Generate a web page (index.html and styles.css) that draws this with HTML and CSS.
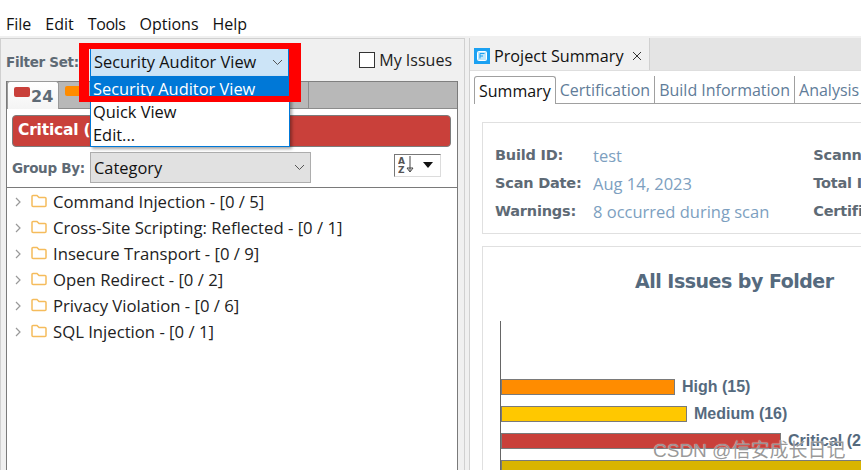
FILE: index.html
```html
<!DOCTYPE html>
<html lang="en">
<head>
<meta charset="utf-8">
<title>Audit Workbench</title>
<link rel="stylesheet" href="styles.css">
</head>
<body>
<nav class="menubar">
  <span>File</span><span>Edit</span><span class="menu-tools">Tools</span><span>Options</span><span>Help</span>
</nav>
<div class="workspace">
  <aside class="left-pane">
    <div class="filter-row">
      <span class="bold-label">Filter Set:</span>
      <div class="combo combo-open">
        <span class="combo-text">Security Auditor View</span>
        <svg class="chev" width="11" height="7" viewBox="0 0 11 7"><path d="M1 1l4.5 4.5L10 1" fill="none" stroke="#555" stroke-width="1"/></svg>
      </div>
      <label class="my-issues"><span class="checkbox"></span>My Issues</label>
    </div>
    <div class="issues-panel">
      <div class="sev-tabs">
        <div class="sev-tab sev-active"><span class="swatch swatch-red"></span><b>24</b></div>
        <div class="sev-tab sev-wide"><span class="swatch swatch-orange"></span></div>
        <div class="sev-tab sev-last"></div>
      </div>
      <div class="critical-bar">Critical (24)</div>
      <div class="group-row">
        <span class="bold-label">Group By:</span>
        <div class="combo combo-grey">
          <span>Category</span>
          <svg class="chev" width="11" height="7" viewBox="0 0 11 7"><path d="M1 1l4.5 4.5L10 1" fill="none" stroke="#555" stroke-width="1"/></svg>
        </div>
        <div class="sort-btn">
          <svg width="20" height="20" viewBox="0 0 20 20"><text x="0" y="9" class="az">A</text><text x="0" y="18" class="az">Z</text><path d="M12 1v15M9 13l3 4 3-4z" fill="none" stroke="#444"/></svg>
          <svg width="12" height="6" viewBox="0 0 12 6"><path d="M1 0h10L6 6z" fill="#111"/></svg>
        </div>
      </div>
      <ul class="tree">
        <li><svg class="arrow" width="7" height="10" viewBox="0 0 7 10"><path d="M1 1l4 4-4 4" fill="none" stroke="#999" stroke-width="1.2"/></svg><svg class="folder" width="16" height="14" viewBox="0 0 16 14"><path d="M1 2.500a1 1 0 0 1 1-1h4l2 2h6a1 1 0 0 1 1 1v7a1 1 0 0 1-1 1H2a1 1 0 0 1-1-1z" fill="#fff" stroke="#f5bc5c" stroke-width="1.500"/></svg>Command Injection - [0 / 5]</li>
        <li><svg class="arrow" width="7" height="10" viewBox="0 0 7 10"><path d="M1 1l4 4-4 4" fill="none" stroke="#999" stroke-width="1.2"/></svg><svg class="folder" width="16" height="14" viewBox="0 0 16 14"><path d="M1 2.500a1 1 0 0 1 1-1h4l2 2h6a1 1 0 0 1 1 1v7a1 1 0 0 1-1 1H2a1 1 0 0 1-1-1z" fill="#fff" stroke="#f5bc5c" stroke-width="1.500"/></svg>Cross-Site Scripting: Reflected - [0 / 1]</li>
        <li><svg class="arrow" width="7" height="10" viewBox="0 0 7 10"><path d="M1 1l4 4-4 4" fill="none" stroke="#999" stroke-width="1.2"/></svg><svg class="folder" width="16" height="14" viewBox="0 0 16 14"><path d="M1 2.500a1 1 0 0 1 1-1h4l2 2h6a1 1 0 0 1 1 1v7a1 1 0 0 1-1 1H2a1 1 0 0 1-1-1z" fill="#fff" stroke="#f5bc5c" stroke-width="1.500"/></svg>Insecure Transport - [0 / 9]</li>
        <li><svg class="arrow" width="7" height="10" viewBox="0 0 7 10"><path d="M1 1l4 4-4 4" fill="none" stroke="#999" stroke-width="1.2"/></svg><svg class="folder" width="16" height="14" viewBox="0 0 16 14"><path d="M1 2.500a1 1 0 0 1 1-1h4l2 2h6a1 1 0 0 1 1 1v7a1 1 0 0 1-1 1H2a1 1 0 0 1-1-1z" fill="#fff" stroke="#f5bc5c" stroke-width="1.500"/></svg>Open Redirect - [0 / 2]</li>
        <li><svg class="arrow" width="7" height="10" viewBox="0 0 7 10"><path d="M1 1l4 4-4 4" fill="none" stroke="#999" stroke-width="1.2"/></svg><svg class="folder" width="16" height="14" viewBox="0 0 16 14"><path d="M1 2.500a1 1 0 0 1 1-1h4l2 2h6a1 1 0 0 1 1 1v7a1 1 0 0 1-1 1H2a1 1 0 0 1-1-1z" fill="#fff" stroke="#f5bc5c" stroke-width="1.500"/></svg>Privacy Violation - [0 / 6]</li>
        <li><svg class="arrow" width="7" height="10" viewBox="0 0 7 10"><path d="M1 1l4 4-4 4" fill="none" stroke="#999" stroke-width="1.2"/></svg><svg class="folder" width="16" height="14" viewBox="0 0 16 14"><path d="M1 2.500a1 1 0 0 1 1-1h4l2 2h6a1 1 0 0 1 1 1v7a1 1 0 0 1-1 1H2a1 1 0 0 1-1-1z" fill="#fff" stroke="#f5bc5c" stroke-width="1.500"/></svg>SQL Injection - [0 / 1]</li>
      </ul>
    </div>
    <ul class="combo-menu">
      <li class="menu-selected">Security Auditor View</li>
      <li>Quick View</li>
      <li>Edit...</li>
    </ul>
    <div class="red-box"></div>
  </aside>
  <main class="right-pane">
    <div class="view-tabs">
      <div class="view-tab">
        <svg width="16" height="16" viewBox="0 0 16 16"><rect width="16" height="16" fill="#1ba1f2"/><rect x="3.500" y="3.500" width="9" height="9" rx="1" fill="#bfe6fb" stroke="#fff"/><path d="M6 5.500h4.500M6 8h3M6 5.500v5" stroke="#1ba1f2" fill="none"/></svg>
        <span>Project Summary</span>
        <svg class="close" width="10" height="10" viewBox="0 0 10 10"><path d="M1 1l8 8M9 1l-8 8" stroke="#333" stroke-width="1"/></svg>
      </div>
    </div>
    <div class="content">
      <div class="sub-tabs">
        <div class="sub-tab sub-active">Summary</div>
        <div class="sub-tab">Certification</div>
        <div class="sub-tab">Build Information</div>
        <div class="sub-tab">Analysis</div>
      </div>
      <section class="card info-card">
        <div class="info-col">
          <div class="info-row"><b>Build ID:</b><span>test</span></div>
          <div class="info-row"><b>Scan Date:</b><span>Aug 14, 2023</span></div>
          <div class="info-row"><b>Warnings:</b><span>8 occurred during scan</span></div>
        </div>
        <div class="info-col info-col2">
          <div class="info-row"><b>Scanned</b></div>
          <div class="info-row"><b>Total Issues</b></div>
          <div class="info-row"><b>Certification</b></div>
        </div>
      </section>
      <section class="card chart-card">
        <h2 class="chart-title">All Issues by Folder</h2>
        <div class="chart">
          <div class="bar-row"><div class="bar bar-high"></div><span>High (15)</span></div>
          <div class="bar-row"><div class="bar bar-medium"></div><span>Medium (16)</span></div>
          <div class="bar-row"><div class="bar bar-critical"></div><span>Critical (24)</span></div>
          <div class="bar-row"><div class="bar bar-low"></div></div>
        </div>
      </section>
    </div>
    <div class="watermark">CSDN @信安成长日记</div>
  </main>
</div>
</body>
</html>
```
FILE: styles.css
```css
* { box-sizing: border-box; }
html, body { margin: 0; padding: 0; }
body {
  width: 861px;
  height: 470px;
  overflow: hidden;
  background: #fff;
  color: #111;
  font-family: "Open Sans", "Noto Sans", sans-serif;
  font-size: 16px;
}
ul { list-style: none; margin: 0; padding: 0; }
.menubar {
  height: 36px;
  display: flex;
  gap: 14px;
  padding: 12px 0 0 6px;
  line-height: 24px;
  background: #fff;
  font-size: 16px;
}
.menu-tools { letter-spacing: -0.4px; }
.workspace {
  height: 434px;
  display: flex;
  background: #f0f0f0;
  padding-top: 2px;
}
.left-pane {
  position: relative;
  width: 465px;
  flex: none;
  border: 1px solid #d0d0d0;
  border-bottom: 0;
  background: #f0f0f0;
  padding: 0 6px 0 5px;
}
.bold-label {
  font-family: "DejaVu Sans", sans-serif;
  font-weight: 700;
  font-size: 13.500px;
  color: #5e6a75;
  letter-spacing: -0.3px;
}
.filter-row {
  height: 42px;
  display: flex;
  align-items: center;
  position: relative;
}
.filter-row .bold-label { width: 84px; flex: none; margin-top: 4px; }
.combo {
  display: flex;
  align-items: center;
  justify-content: space-between;
  padding: 0 5px 0 3px;
  font-size: 16.400px;
}
.combo-open {
  width: 199px;
  height: 28px;
  background: #cce4f7;
  border: 1px solid #0078d7;
  border-bottom: 0;
  margin-top: 4px;
}
.combo-text { margin-top: -2px; }
.my-issues {
  margin-left: auto;
  margin-right: 6px;
  display: flex;
  align-items: center;
  gap: 4px;
  color: #222;
}
.checkbox {
  width: 16px;
  height: 16px;
  border: 1px solid #333;
  background: #fff;
}
.issues-panel {
  height: 400px;
  background: #fff;
  border: 1px solid #7a7a7a;
  border-top: 0;
}
.sev-tabs {
  height: 28px;
  display: flex;
  background: #b8b8b8;
  border-top: 1px solid #7f7f7f;
  border-bottom: 1px solid #8c8c8c;
}
.sev-tab {
  display: flex;
  align-items: center;
  gap: 1px;
  border-right: 1px solid #8c8c8c;
  padding-left: 6px;
}
.sev-active {
  width: 52px;
  background: linear-gradient(#fff, #f4f4f4);
  height: 28px;
  border: 1px solid #9a9a9a;
  border-bottom: 0;
  border-radius: 3px 3px 0 0;
  margin-top: -1px;
  padding-top: 1px;
}
.sev-active b {
  font-family: "DejaVu Sans", sans-serif;
  font-size: 16px;
  color: #5e6a75;
}
.sev-wide { width: 250px; }
.sev-last { width: 0; flex: 1; border-right: 0; }
.swatch {
  width: 16px;
  height: 10px;
  border-radius: 2px;
  margin-top: -8px;
}
.swatch-red { background: #c9403a; }
.swatch-orange { background: #ff8c00; }
.critical-bar {
  height: 32px;
  margin: 6px 6px 0 5px;
  background: #c9403a;
  border: 1px solid #7c7c7c;
  border-radius: 4px;
  color: #fff;
  font-family: "DejaVu Sans", sans-serif;
  font-weight: 700;
  font-size: 15.500px;
  letter-spacing: -0.2px;
  line-height: 28px;
  padding-left: 5px;
}
.group-row {
  height: 36px;
  margin-top: 4px;
  display: flex;
  align-items: center;
  padding-left: 5px;
  padding-bottom: 3px;
}
.group-row .bold-label { width: 78px; flex: none; }
.combo-grey {
  width: 221px;
  height: 31px;
  background: #e1e1e1;
  border: 1px solid #adadad;
}
.sort-btn {
  width: 47px;
  height: 23px;
  margin-left: 83px;
  margin-top: -5px;
  background: #fff;
  border: 1px solid #dcdcdc;
  border-top-color: #777;
  border-left-color: #777;
  display: flex;
  align-items: center;
  gap: 4px;
  padding-left: 3px;
}
.az { font: 700 9px "DejaVu Sans", sans-serif; fill: #555; }
.tree {
  border-top: 1px solid #7a7a7a;
}
.tree li {
  height: 26px;
  display: flex;
  align-items: center;
  padding-left: 8px;
  font-size: 16.700px;
  color: #222;
  white-space: nowrap;
}
.arrow { margin-right: 9px; margin-top: 1px; }
.folder { margin-right: 6px; }
.combo-menu {
  position: absolute;
  left: 89px;
  top: 37px;
  width: 200px;
  background: #fff;
  border: 1px solid #0078d7;
  box-shadow: 2px 2px 3px rgba(0,0,0,.35);
  z-index: 2;
  font-size: 16.400px;
  line-height: 23px;
}
.combo-menu li { padding-left: 2px; height: 23px; }
.combo-menu .menu-selected { background: #0078d7; color: #fff; }
.red-box {
  position: absolute;
  left: 78px;
  top: 4px;
  width: 222px;
  height: 59px;
  border-style: solid;
  border-color: #ff0000;
  border-width: 6px 12px 6px 10px;
  z-index: 3;
}
.right-pane {
  position: relative;
  flex: 1;
  min-width: 0;
  margin-left: 4px;
  border-left: 1px solid #d0d0d0;
  background: #fff;
  overflow: hidden;
}
.view-tabs {
  height: 33px;
  background: #e4e4e4;
  display: flex;
  border-bottom: 1px solid #dedede;
}
.view-tab {
  width: 180px;
  background: #f0f0f0;
  border-right: 1px solid #d0d0d0;
  display: flex;
  align-items: center;
  gap: 4px;
  padding: 3px 0 0 4px;
  height: 32px;
  font-size: 16.200px;
}
.view-tab .close { margin-left: 4px; }
.content { padding: 0 0 0 4px; width: 500px; }
.sub-tabs {
  height: 28px;
  margin-top: 5px;
  display: flex;
  border-bottom: 1px solid #a0a0a0;
  color: #5f7c99;
}
.sub-tab {
  padding: 2px 4px 0 4px;
  border-right: 1px solid #a0a0a0;
  white-space: nowrap;
  line-height: 24px;
}
.sub-active {
  color: #111;
  border: 1px solid #a0a0a0;
  border-bottom: 0;
  border-radius: 3px 3px 0 0;
  height: 28px;
  background: #fff;
}
.card {
  border: 1px solid #e0e0e0;
  margin-left: 8px;
  border-right: 0;
  background: #fff;
  width: 420px;
}
.info-card {
  height: 112px;
  margin-top: 18px;
  display: flex;
  padding-top: 18px;
}
.info-col { padding-left: 12px; }
.info-col2 { margin-left: 32px; }
.info-row {
  display: flex;
  height: 28px;
  align-items: center;
  white-space: nowrap;
  color: #7d9fbf;
  font-size: 16.500px;
}
.info-row b {
  width: 98px;
  font-family: "DejaVu Sans", sans-serif;
  font-size: 14.500px;
  color: #5e6a75;
  letter-spacing: -0.2px;
}
.chart-card {
  height: 240px;
  margin-top: 12px;
  padding: 21px 0 0 17px;
  overflow: hidden;
}
.chart-title {
  margin: 0;
  padding-left: 135px;
  font-family: "DejaVu Sans", sans-serif;
  font-weight: 700;
  font-size: 19px;
  line-height: 26px;
  color: #556a7e;
  letter-spacing: -0.5px;
  white-space: nowrap;
}
.chart {
  margin-top: 27px;
  height: 160px;
  border-left: 1px solid #666;
  padding-top: 58px;
  display: flex;
  flex-direction: column;
  gap: 11px;
}
.bar-row {
  display: flex;
  align-items: center;
  gap: 7px;
  height: 16px;
  font-family: "Liberation Sans", sans-serif;
  font-weight: 700;
  font-size: 16px;
  color: #556a7e;
  white-space: nowrap;
  flex: none;
}
.bar { height: 16px; border: 1px solid #7a7a7a; flex: none; }
.bar-high { width: 174px; background: #ff8c00; }
.bar-medium { width: 186px; background: #ffc800; }
.bar-critical { width: 280px; background: #c9403a; }
.bar-low { width: 400px; background: #d9b400; }
.watermark {
  position: absolute;
  left: 183px;
  top: 397px;
  font-family: "Liberation Sans", "Noto Sans CJK SC", sans-serif;
  font-size: 19px;
  color: rgba(120,120,120,.75);
  text-shadow: 0 0 1px #fff;
  white-space: nowrap;
}
```
